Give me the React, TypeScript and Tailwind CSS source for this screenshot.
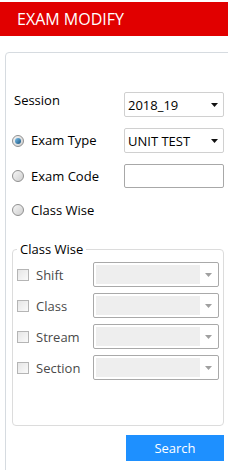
import React from 'react';

const font = { fontFamily: '"Open Sans", "Noto Sans", sans-serif' };

function Radio({ checked }: { checked?: boolean }) {
  return (
    <span className="flex h-[12px] w-[12px] shrink-0 items-center justify-center rounded-full border border-[#8f8f8f] bg-gradient-to-br from-[#f6f6f6] to-[#cfcfcf]">
      {checked && <span className="h-[6px] w-[6px] rounded-full bg-gradient-to-br from-[#7cc3ee] to-[#17547f]" />}
    </span>
  );
}

function Checkbox() {
  return <span className="h-[12px] w-[12px] shrink-0 border border-[#b5b5b5] bg-gradient-to-br from-[#e6e6e6] to-[#fafafa]" />;
}

function Caret({ color }: { color: string }) {
  return (
    <svg width="7" height="4" viewBox="0 0 7 4" className="shrink-0">
      <path d="M0 0h7L3.5 4z" fill={color} />
    </svg>
  );
}

function SelectBox({ value }: { value: string }) {
  return (
    <div className="flex h-[25px] w-[100px] items-center justify-between rounded-[2px] border border-[#d0d0d0] pl-[3px] pr-[5px] text-[13px] text-black">
      <span>{value}</span>
      <Caret color="#111" />
    </div>
  );
}

function DisabledSelect() {
  return (
    <div className="flex h-[25px] w-[126px] items-center rounded-[2px] border border-[#a9a9a9] p-[2px]">
      <div className="h-full w-[104px] bg-[#eeeeee]" />
      <div className="flex flex-1 justify-center">
        <Caret color="#a0a0a0" />
      </div>
    </div>
  );
}

const classRows = ['Shift', 'Class', 'Stream', 'Section'];

export default function App() {
  return (
    <div className="h-[470px] w-[228px] overflow-hidden bg-white" style={font}>
      <div className="mt-[2px] flex h-[34px] items-center bg-[#e10000] pl-[17px] text-[16px] text-white">
        EXAM MODIFY
      </div>
      <div className="ml-[5px] mt-[16px] h-[460px] w-[260px] rounded-tl-[4px] border border-[#d6dbe0] pl-[6px]">
        <div className="flex w-[212px] flex-col text-[13px] leading-[16px] text-black">
          <div className="mt-[39px] flex h-[25px] items-start justify-between">
            <span className="ml-[2px]">Session</span>
            <SelectBox value="2018_19" />
          </div>
          <div className="mt-[11px] flex h-[25px] items-center justify-between">
            <label className="flex items-center gap-[7px]">
              <Radio checked />
              <span className="-mt-[2px]">Exam Type</span>
            </label>
            <SelectBox value="UNIT TEST" />
          </div>
          <div className="mt-[11px] flex h-[24px] items-center justify-between">
            <label className="flex items-center gap-[7px]">
              <Radio />
              <span>Exam Code</span>
            </label>
            <div className="h-[24px] w-[100px] rounded-[2px] border border-[#a8a8a8]" />
          </div>
          <div className="mt-[10px] flex h-[24px] items-center">
            <label className="flex items-center gap-[7px]">
              <Radio />
              <span>Class Wise</span>
            </label>
          </div>
          <fieldset className="mt-[19px] rounded-[4px] border border-[#dcdcdc] px-[4px] pb-[45px]">
            <legend className="px-[3px] text-black">Class Wise</legend>
            <div className="mt-[5px] flex flex-col gap-[6px]">
              {classRows.map((r) => (
                <div key={r} className="flex h-[25px] items-center justify-between">
                  <label className="flex items-center gap-[7px] text-[#4a4a4a]">
                    <Checkbox />
                    <span>{r}</span>
                  </label>
                  <DisabledSelect />
                </div>
              ))}
            </div>
          </fieldset>
          <div className="mt-[9px] flex justify-end">
            <button className="h-[26px] w-[98px] bg-[#1e90ff] text-[13px] text-white">Search</button>
          </div>
        </div>
      </div>
    </div>
  );
}
